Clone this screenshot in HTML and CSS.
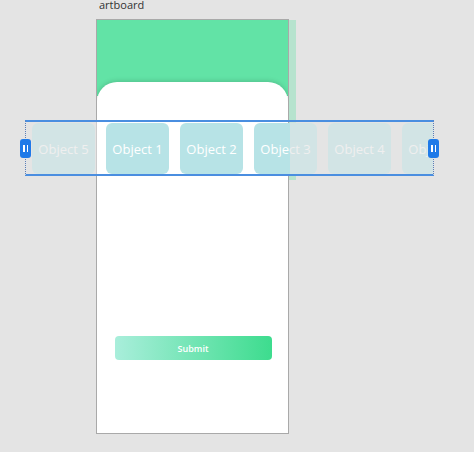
FILE: index.html
```html
<!DOCTYPE html>
<html lang="en">
<head>
    <meta charset="UTF-8">
    <title>Carousel editor</title>
    <link rel="stylesheet" href="styles.css">
</head>
<body>
    <div class="canvas">
        <div class="artboard-label">artboard</div>

        <div class="artboard">
            <div class="artboard-header"></div>
            <div class="artboard-card">
                <button class="submit-btn">Submit</button>
            </div>
        </div>
        <div class="overflow-strip"></div>

        <!-- selected carousel, spills past the artboard edges -->
        <div class="carousel">
            <div class="carousel-track">
                <div class="carousel-item">Object 5</div>
                <div class="carousel-item">Object 1</div>
                <div class="carousel-item">Object 2</div>
                <div class="carousel-item">Object 3</div>
                <div class="carousel-item">Object 4</div>
                <div class="carousel-item">Object 5</div>
            </div>
            <div class="fade fade-left"></div>
            <div class="fade fade-right"></div>
        </div>
        <div class="handle handle-left"><span></span><span></span></div>
        <div class="handle handle-right"><span></span><span></span></div>
    </div>
</body>
</html>
```

FILE: styles.css
```css
:root {
    --canvas-bg: #e4e4e4;
    --green: #62e3a6;
    --item-bg: #b7e3e6;
    --select-blue: #4a8ee0;
    --handle-blue: #1f7ae8;
}

body {
    margin: 0;
    background-color: var(--canvas-bg);
    font-family: 'Open Sans', 'Noto Sans', Arial, sans-serif;
    overflow: hidden;
}

.canvas {
    position: relative;
    width: 474px;
    height: 452px;
}

.artboard-label {
    position: absolute;
    left: 99px;
    top: -3px;
    font-size: 11px;
    color: #333;
}

.artboard {
    position: absolute;
    left: 96px;
    top: 19px;
    width: 191px;
    height: 413px;
    border: 1px solid #a9a9a9;
    background-color: white;
    overflow: hidden;
    display: flex;
    flex-direction: column;
}

.artboard-header {
    height: 76px;
    margin-bottom: -14px;
    background-color: var(--green);
    flex-shrink: 0;
}

.artboard-card {
    flex: 1;
    background-color: white;
    border-radius: 20px 20px 0 0;
    box-shadow: 0 -1px 5px rgba(0, 0, 0, 0.16);
    display: flex;
    flex-direction: column;
    align-items: center;
    padding-top: 254px;
    position: relative;
}

.submit-btn {
    width: 157px;
    height: 24px;
    margin-left: 1px;
    border: none;
    border-radius: 4px;
    background: linear-gradient(to right, #a9eedb, #3ddc8e);
    color: white;
    font-family: inherit;
    font-size: 9px;
    font-weight: 600;
}

.overflow-strip {
    position: absolute;
    left: 289px;
    top: 20px;
    width: 7px;
    height: 160px;
    background-color: rgba(98, 227, 166, 0.35);
}

.carousel {
    position: absolute;
    left: 25px;
    top: 120px;
    width: 407px;
    height: 52px;
    border-top: 2px solid var(--select-blue);
    border-bottom: 2px solid var(--select-blue);
    border-left: 1px dotted #5b7fb8;
    border-right: 1px dotted #5b7fb8;
    overflow: hidden;
}

.carousel-track {
    display: flex;
    gap: 11px;
    padding-left: 6px;
    padding-top: 1px;
}

.carousel-item {
    flex-shrink: 0;
    width: 63px;
    height: 51px;
    border-radius: 6px;
    background-color: var(--item-bg);
    color: white;
    font-size: 13px;
    display: flex;
    align-items: center;
    justify-content: center;
}

/* parts outside the artboard are dimmed */
.fade {
    position: absolute;
    top: 0;
    bottom: 0;
    background-color: rgba(228, 228, 228, 0.6);
}

.fade-left {
    left: 0;
    width: 71px;
}

.fade-right {
    left: 264px;
    right: 0;
}

.handle {
    position: absolute;
    top: 139px;
    width: 11px;
    height: 19px;
    border-radius: 3px;
    background-color: var(--handle-blue);
    display: flex;
    justify-content: center;
    align-items: center;
    gap: 2px;
}

.handle span {
    width: 1.5px;
    height: 7px;
    background-color: white;
}

.handle-left {
    left: 20px;
}

.handle-right {
    left: 428px;
}
```
